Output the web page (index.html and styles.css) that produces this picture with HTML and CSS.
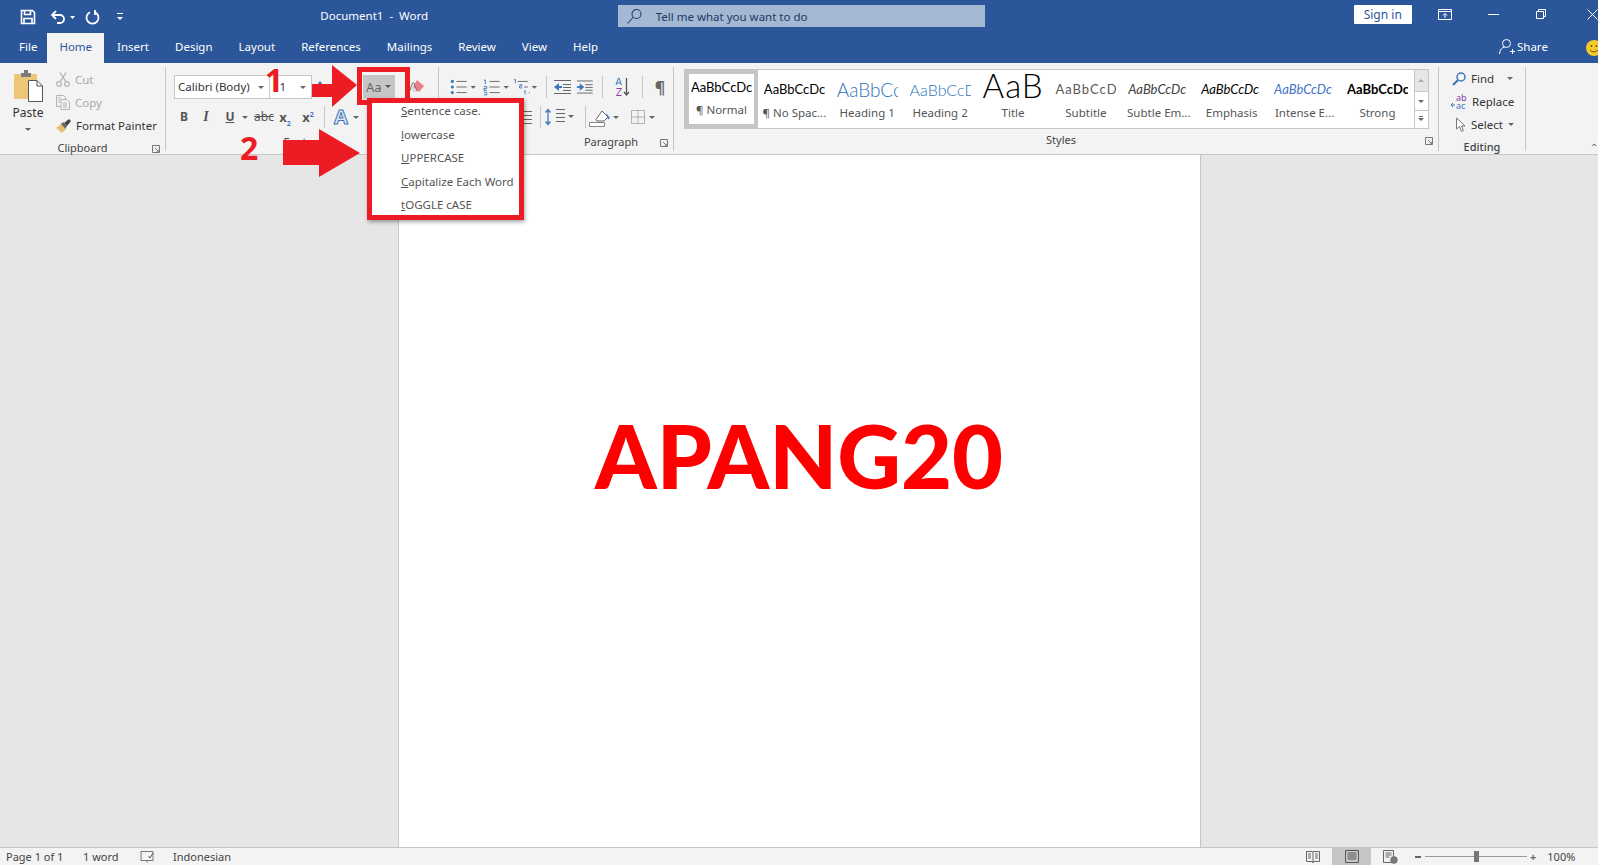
FILE: index.html
```html
<!DOCTYPE html>
<html lang="en">

<head>
    <meta charset="UTF-8">
    <meta name="viewport" content="width=device-width, initial-scale=1.0">
    <title>Document1 - Word</title>
    <link rel="stylesheet" href="styles.css">
</head>

<body>
    <div class="app">
        <header class="top">
            <div class="titlebar">
                <div class="qat">
                    <svg class="qat-save" width="16" height="16" viewBox="0 0 16 16" fill="none" stroke="#fff" stroke-width="1.6"><path d="M1.5 1.5h11l2 2v11h-13z"/><path d="M4.5 1.5v4h6v-4M4 14.5v-5h8v5"/></svg>
                    <svg class="qat-undo" width="28" height="16" viewBox="0 0 28 16" fill="none" stroke="#fff" stroke-width="1.8"><path d="M2 6h8a4 4 0 0 1 0 8H7"/><path d="M6 2L2 6l4 4"/><path d="M20 7h5l-2.500 3z" fill="#fff" stroke="none"/></svg>
                    <svg class="qat-redo" width="16" height="16" viewBox="0 0 16 16" fill="none" stroke="#fff" stroke-width="1.8"><path d="M5 3.200a6 6 0 1 0 5 0"/><path d="M10 1v5"/><path d="M6 1v.1" /></svg>
                    <svg class="qat-more" width="8" height="10" viewBox="0 0 8 10" fill="#fff"><path d="M1 1h6v1H1zM1 5h6L4 8z"/></svg>
                </div>
                <div class="doc-title">Document1&nbsp; - &nbsp;Word</div>
                <div class="tell-me">
                    <svg width="17" height="17" viewBox="0 0 17 17" fill="none" stroke="#24406e" stroke-width="1.100"><circle cx="10.500" cy="6" r="4.500"/><path d="M7 9.500L1.500 15.500"/></svg>
                    <span>Tell me what you want to do</span>
                </div>
                <div class="sign-in">Sign in</div>
                <div class="win-btns">
                    <svg width="14" height="11" viewBox="0 0 14 11" fill="none" stroke="#fff"><path d="M.5.500h13v10H.5zM.5 2.500h13M7 9V4.500M5 6.500l2-2 2 2"/></svg>
                    <svg width="11" height="1" viewBox="0 0 11 1" fill="#fff"><path d="M0 0h11v1H0z"/></svg>
                    <svg width="10" height="10" viewBox="0 0 10 10" fill="none" stroke="#fff"><path d="M.5 2.500h7v7h-7zM2.500 2.500v-2h7v7h-2"/></svg>
                    <svg width="11" height="11" viewBox="0 0 11 11" fill="none" stroke="#fff"><path d="M.5.500l10 10M10.500.500l-10 10"/></svg>
                </div>
            </div>
            <nav class="tabs">
                <span class="tab tab-file">File</span>
                <span class="tab tab-active">Home</span>
                <span class="tab">Insert</span>
                <span class="tab">Design</span>
                <span class="tab">Layout</span>
                <span class="tab">References</span>
                <span class="tab">Mailings</span>
                <span class="tab">Review</span>
                <span class="tab">View</span>
                <span class="tab">Help</span>
                <span class="share">
                    <svg width="17" height="17" viewBox="0 0 17 17" fill="none" stroke="#fff"><circle cx="8.500" cy="5.500" r="4"/><path d="M1.500 16c0-4 2.500-6.500 5-6.800M12 13.500h5M14.500 11v5"/></svg>
                    Share
                </span>
                <svg class="smiley" width="16" height="16" viewBox="0 0 16 16"><circle cx="8" cy="8" r="8" fill="#f5c92a"/><circle cx="5.500" cy="6" r="1" fill="#6b5200"/><circle cx="10.500" cy="6" r="1" fill="#6b5200"/><path d="M4 10c2 2.500 6 2.500 8 0" fill="none" stroke="#6b5200"/></svg>
            </nav>
        </header>

        <section class="ribbon">
            <div class="group group-clipboard">
                <div class="group-body clip-body">
                    <div class="paste">
                        <svg width="30" height="32" viewBox="0 0 30 32"><path d="M1 4h23v25H1z" fill="#eec678"/><path d="M8 3h3V0h4v3h3v4H8z" fill="#7b7b7b"/><path d="M15 10h9l6 6v16H15z" fill="#fff"/><path d="M15.500 10.500h8.500l5.500 5.500v15.500h-14zM24 10.500V16h5.500" fill="none" stroke="#555"/></svg>
                        <span class="paste-label">Paste</span>
                        <i class="caret"></i>
                    </div>
                    <div class="clip-list">
                        <div class="clip-item is-off">
                            <svg width="14" height="15" viewBox="0 0 14 15" fill="none" stroke="#b4b4b4" stroke-width="1.300"><circle cx="3" cy="12" r="2.300"/><circle cx="11" cy="12" r="2.300"/><path d="M4 10L10 .5M10 10L4 .5"/></svg>
                            Cut
                        </div>
                        <div class="clip-item is-off">
                            <svg width="14" height="15" viewBox="0 0 14 15" fill="#f3f3f3" stroke="#b4b4b4"><path d="M.5.500h7l2 2v9h-9z"/><path d="M5 4.500h6l2.500 2.500v7.500H5z"/><path d="M7 8h4M7 10h4M7 12h4M2 3h3M2 5h2M2 7h2"/></svg>
                            Copy
                        </div>
                        <div class="clip-item">
                            <svg width="15" height="14" viewBox="0 0 15 14"><path d="M0 9l5-4 5 5-4 4z" fill="#e7bf73"/><path d="M5 5l2-2 4 4-1.500 3z" fill="#666"/><path d="M8 4l5-4 2 2-4 5z" fill="#444"/></svg>
                            Format Painter
                        </div>
                    </div>
                </div>
                <div class="group-label">Clipboard<svg class="launcher" width="8" height="8" viewBox="0 0 8 8" fill="none" stroke="#777"><path d="M.5 7.500v-7h7v7zM3 3l4 4M7 4.500V7H4.500"/></svg></div>
            </div>

            <div class="group group-font">
                <div class="group-body">
                    <div class="tool-row font-row1">
                        <div class="combo combo-name">Calibri (Body)<i class="caret"></i></div>
                        <div class="combo combo-size">11<i class="caret"></i></div>
                        <svg class="grow" width="26" height="14" viewBox="0 0 26 14"><path d="M5 5l3-4 3 4z" fill="#3f78b8"/></svg>
                        <svg class="shrink" width="25" height="14" viewBox="0 0 25 14"></svg>
                        <div class="change-case">Aa<i class="caret"></i></div>
                        <svg class="eraser" width="16" height="15" viewBox="0 0 16 15"><path d="M8 1L15 7l-5 6L4 8z" fill="#ec7d8d"/><path d="M4 8l6 5H5L2 10z" fill="#d9d9d9"/><path d="M0 14L3.500 4h1.500L8 12" fill="none" stroke="#777"/></svg>
                    </div>
                    <div class="tool-row font-row2">
                        <span class="fb fb-b">B</span>
                        <span class="fb fb-i">I</span>
                        <span class="fb fb-u">U</span><i class="caret fb-caret"></i>
                        <span class="fb fb-abc">abc</span>
                        <span class="fb fb-x">x<sub>2</sub></span>
                        <span class="fb fb-x fb-sup">x<sup>2</sup></span>
                        <i class="vsep"></i>
                        <span class="fb fb-a">A</span><i class="caret fb-caret"></i>
                    </div>
                </div>
                <div class="group-label font-label">Font</div>
            </div>

            <div class="group group-para">
                <div class="group-body">
                    <div class="tool-row para-row1">
                        <svg width="35" height="18" viewBox="0 0 35 18"><g fill="#3f78b8"><circle cx="2.500" cy="3" r="1.700"/><circle cx="2.500" cy="9" r="1.700"/><circle cx="2.500" cy="15" r="1.700"/></g><path d="M7 3h11M7 9h11M7 15h11" stroke="#666"/><path d="M22 8h6l-3 3z" fill="#666"/></svg>
                        <svg width="33" height="18" viewBox="0 0 33 18"><g fill="none" stroke="#3f78b8"><path d="M1 1.500h1.500V6M1 8.500h3v2H1v2h3M1 14.500h3v3H1"/></g><path d="M7 3h11M7 9h11M7 15h11" stroke="#666"/><path d="M22 8h6l-3 3z" fill="#666"/></svg>
                        <svg width="31" height="18" viewBox="0 0 31 18"><g fill="none" stroke="#3f78b8"><path d="M1 1h1.500v4M7 6.500h2.500v1.500H7v2h3M12 13h1v4"/></g><path d="M5 3h11M12 9h4M17 15h1" stroke="#666"/><path d="M20 8h6l-3 3z" fill="#666"/></svg>
                        <i class="vsep"></i>
                        <svg width="25" height="18" viewBox="0 0 25 18"><path d="M3 9l5-4v8z" fill="#3f78b8"/><path d="M7 9h4" stroke="#3f78b8" stroke-width="2"/><path d="M3 2.500h17M12 6.500h8M12 9.500h8M12 12.500h8M3 15.500h17" stroke="#666"/></svg>
                        <svg width="24" height="18" viewBox="0 0 24 18"><path d="M9 9l-5-4v8z" fill="#3f78b8"/><path d="M1 9h5" stroke="#3f78b8" stroke-width="2"/><path d="M1 2.500h17M10 6.500h8M10 9.500h8M10 12.500h8M1 15.500h17" stroke="#666"/></svg>
                        <i class="vsep"></i>
                        <svg width="31" height="20" viewBox="0 0 31 20"><path d="M9 8l2.500-7h.5L14.500 8M10 6h4" fill="none" stroke="#3f78b8"/><path d="M9.500 11.500h5L9.500 18.500h5" fill="none" stroke="#8d3fa8"/><path d="M19.500 1v17M17 15l2.500 3 2.500-3" fill="none" stroke="#555" stroke-width="1.300"/></svg>
                        <i class="vsep"></i>
                        <span class="pilcrow">¶</span>
                    </div>
                    <div class="tool-row para-row2">
                        <svg width="22" height="16" viewBox="0 0 22 16"><path d="M3 2.500h14M3 6.500h10M3 10.500h14M3 14.500h10" stroke="#666"/></svg>
                        <svg width="22" height="16" viewBox="0 0 22 16"><path d="M3 2.500h14M5 6.500h10M3 10.500h14M5 14.500h10" stroke="#666"/></svg>
                        <svg width="22" height="16" viewBox="0 0 22 16"><path d="M3 2.500h14M7 6.500h10M3 10.500h14M7 14.500h10" stroke="#666"/></svg>
                        <svg width="22" height="16" viewBox="0 0 22 16"><path d="M3 2.500h14M3 6.500h14M3 10.500h14M3 14.500h14" stroke="#666"/></svg>
                        <i class="vsep"></i>
                        <svg width="38" height="18" viewBox="0 0 38 18"><path d="M12 1.500h9M12 5.500h9M12 9.500h9M12 13.500h9" stroke="#666"/><path d="M4 2v14M1.500 4.500L4 1.500l2.500 3M1.500 13.500L4 16.500l2.500-3" fill="none" stroke="#3f78b8" stroke-width="1.300"/><path d="M24 7h6l-3 3z" fill="#666"/></svg>
                        <i class="vsep"></i>
                        <svg width="38" height="19" viewBox="0 0 38 19"><path d="M7 11.500L13 3l6 6-4 4H8z" fill="#fff" stroke="#666"/><path d="M17 5l4 5-2 1.500z" fill="#3f78b8"/><path d="M.5 14.500h15v4H.5z" fill="#fff" stroke="#888"/><path d="M24 8h6l-3 3z" fill="#666"/></svg>
                        <svg width="30" height="16" viewBox="0 0 30 16"><path d="M4.500 1.500h13v13h-13zM11 1.500v13M4.500 8h13" fill="none" stroke="#777" stroke-dasharray="1 1"/><path d="M22 7h6l-3 3z" fill="#666"/></svg>
                    </div>
                </div>
                <div class="group-label para-label">Paragraph<svg class="launcher" width="8" height="8" viewBox="0 0 8 8" fill="none" stroke="#777"><path d="M.5 7.500v-7h7v7zM3 3l4 4M7 4.500V7H4.500"/></svg></div>
            </div>

            <div class="group group-styles">
                <div class="gallery">
                    <div class="style-item is-current"><div class="preview">AaBbCcDc</div><div class="style-name">¶ Normal</div></div>
                    <div class="style-item"><div class="preview">AaBbCcDc</div><div class="style-name">¶ No Spac...</div></div>
                    <div class="style-item"><div class="preview pv-h1">AaBbCc</div><div class="style-name">Heading 1</div></div>
                    <div class="style-item"><div class="preview pv-h2">AaBbCcD</div><div class="style-name">Heading 2</div></div>
                    <div class="style-item"><div class="preview pv-title">AaB</div><div class="style-name">Title</div></div>
                    <div class="style-item"><div class="preview pv-sub">AaBbCcD</div><div class="style-name">Subtitle</div></div>
                    <div class="style-item"><div class="preview pv-subtle">AaBbCcDc</div><div class="style-name">Subtle Em...</div></div>
                    <div class="style-item"><div class="preview pv-em">AaBbCcDc</div><div class="style-name">Emphasis</div></div>
                    <div class="style-item"><div class="preview pv-intense">AaBbCcDc</div><div class="style-name">Intense E...</div></div>
                    <div class="style-item"><div class="preview pv-strong">AaBbCcDc</div><div class="style-name">Strong</div></div>
                    <div class="gallery-scroll">
                        <span class="scroll-up"><i class="caret caret-up"></i></span>
                        <span><i class="caret"></i></span>
                        <span class="scroll-more"><i class="caret"></i></span>
                    </div>
                </div>
                <div class="group-label">Styles<svg class="launcher" width="8" height="8" viewBox="0 0 8 8" fill="none" stroke="#777"><path d="M.5 7.500v-7h7v7zM3 3l4 4M7 4.500V7H4.500"/></svg></div>
            </div>

            <div class="group group-editing">
                <div class="group-body edit-list">
                    <div class="edit-item">
                        <svg width="14" height="14" viewBox="0 0 14 14" fill="none" stroke="#3f78b8" stroke-width="1.500"><circle cx="9" cy="5" r="4"/><path d="M6 8l-5 5" stroke-width="2.200"/></svg>
                        Find<i class="caret edit-caret"></i>
                    </div>
                    <div class="edit-item">
                        <svg class="edit-replace" width="18" height="16" viewBox="0 0 18 16"><text x="6" y="7" class="rep-ab">ab</text><text x="6" y="15" class="rep-ac">ac</text><path d="M1 11h4M3 9l-2 2 2 2" fill="none" stroke="#3f78b8"/></svg>
                        Replace
                    </div>
                    <div class="edit-item">
                        <svg width="14" height="16" viewBox="0 0 14 16" fill="#fff" stroke="#777"><path d="M4.500 1v11l3-2.500 2 5 2-1-2-4.500h3.500z"/></svg>
                        Select<i class="caret"></i>
                    </div>
                </div>
                <div class="group-label editing-label">Editing</div>
            </div>
            <span class="collapse">⌃</span>
        </section>

        <main class="workspace">
            <div class="page">
                <div class="big-text">APANG20</div>
            </div>
        </main>

        <footer class="statusbar">
            <span class="st-page">Page 1 of 1</span>
            <span class="st-words">1 word</span>
            <svg class="st-proof" width="14" height="13" viewBox="0 0 14 13" fill="none" stroke="#777"><path d="M7 1.500H1v9h6v2M7 1.500h6v9H7"/><path d="M8.500 6l1.500 2 3-5" stroke="#555"/></svg>
            <span class="st-lang">Indonesian</span>
            <div class="st-right">
                <svg class="st-read" width="14" height="14" viewBox="0 0 14 14" fill="none" stroke="#666"><path d="M.5 1.500h6l.5 1 .5-1h6v10h-6L7 13l-.5-1.500h-6zM7 2.500v9M2 4h3M2 6h3M2 8h3M9 4h3M9 6h3M9 8h3"/></svg>
                <span class="st-print">
                    <svg width="14" height="13" viewBox="0 0 14 13" fill="none" stroke="#555"><path d="M.5.500h13v12H.5zM2.500 3h9M2.500 5h9M2.500 7h9M2.500 9h9"/></svg>
                </span>
                <svg class="st-web" width="15" height="14" viewBox="0 0 15 14"><path d="M.5.500h10v12H.5zM2.500 3h6M2.500 5h6M2.500 7h4" fill="none" stroke="#666"/><circle cx="11" cy="10" r="3.700" fill="#777"/></svg>
                <span class="zoom-minus"></span>
                <span class="slider"><i class="thumb"></i></span>
                <span class="zoom-plus">+</span>
                <span class="zoom-val">100%</span>
            </div>
        </footer>

        <!-- tutorial markup over the screenshot -->
        <svg class="arrows" width="380" height="130" viewBox="0 0 380 130">
            <path d="M32 19h20V0l25 20-25 22V32H32z" fill="#ed1c24"/>
            <path d="M3 75h36V64l41 24-41 24V100H3z" fill="#ed1c24"/>
        </svg>
        <span class="mark mark-1">1</span>
        <span class="mark mark-2">2</span>
        <div class="mark-box"></div>
        <ul class="case-menu">
            <li><u>S</u>entence case.</li>
            <li><u>l</u>owercase</li>
            <li><u>U</u>PPERCASE</li>
            <li><u>C</u>apitalize Each Word</li>
            <li><u>t</u>OGGLE cASE</li>
        </ul>
    </div>
</body>

</html>
```

FILE: styles.css
```css
* {
    box-sizing: border-box;
}

body {
    margin: 0;
    overflow: hidden;
    font-family: "Noto Sans", sans-serif;
    font-size: 11.5px;
    color: #444;
}

.app {
    position: relative;
    display: flex;
    flex-direction: column;
    width: 1598px;
    height: 865px;
    overflow: hidden;
}

i {
    display: inline-block;
}

.caret {
    width: 0;
    height: 0;
    border-left: 3px solid transparent;
    border-right: 3px solid transparent;
    border-top: 3px solid #666;
}

.caret-up {
    border-top: 0;
    border-bottom: 3px solid #aaa;
}

.vsep {
    width: 1px;
    height: 22px;
    background: #c6c6c6;
}

/* title bar + tabs */
.top {
    flex: none;
    height: 63px;
    background: #2b579a;
    color: #fff;
}

.titlebar {
    position: relative;
    display: flex;
    align-items: center;
    height: 33px;
}

.qat {
    display: flex;
    align-items: center;
    width: 323px;
    padding-left: 20px;
}

.qat-undo {
    margin-left: 14px;
}

.qat-redo {
    margin-left: 7px;
}

.qat-more {
    margin-left: 15px;
}

.doc-title {
    width: 300px;
    margin-top: -3px;
}

.tell-me {
    display: flex;
    align-items: center;
    gap: 13px;
    width: 370px;
    height: 22px;
    margin-top: -1px;
    padding-left: 8px;
    background: #a3b8d3;
    color: #1f3864;
}

.sign-in {
    width: 59px;
    height: 19px;
    margin-left: 369px;
    margin-top: -4px;
    border-radius: 1px;
    background: #fff;
    color: #2b579a;
    font-size: 12px;
    line-height: 19px;
    text-align: center;
}

.win-btns {
    display: flex;
    align-items: center;
    margin-left: 26px;
    margin-top: -5px;
    gap: 36px;
}

.win-btns svg:nth-child(3) {
    margin-left: 1px;
}

.win-btns svg:nth-child(4) {
    margin-left: 5px;
}

.tabs {
    position: relative;
    display: flex;
    height: 30px;
    padding-left: 6px;
}

.tab {
    padding: 0 13px;
    line-height: 28px;
    font-size: 11.5px;
}

.tab-file {
    padding-right: 10px;
}

.tab-active {
    padding: 0 12px;
    background: #f3f3f3;
    color: #2b579a;
}

.share {
    position: absolute;
    left: 1498px;
    top: 5px;
    display: flex;
    align-items: center;
    gap: 2px;
}

.smiley {
    position: absolute;
    left: 1586px;
    top: 7px;
}

/* ribbon */
.ribbon {
    position: relative;
    flex: none;
    display: flex;
    height: 92px;
    background: #f3f3f3;
    border-bottom: 1px solid #c6c6c6;
}

.group {
    position: relative;
    display: flex;
    flex-direction: column;
    margin-top: 4px;
    height: 84px;
    border-right: 1px solid #c6c6c6;
}

.group-body {
    flex: 1;
}

.group-label {
    position: relative;
    height: 17px;
    line-height: 16px;
    text-align: center;
    font-size: 11px;
    margin-top: 3px;
}

.launcher {
    position: absolute;
    right: 5px;
    top: 5px;
}

.group-clipboard {
    width: 166px;
}

.clip-body {
    display: flex;
}

.paste {
    display: flex;
    flex-direction: column;
    align-items: center;
    width: 56px;
    padding-top: 3px;
}

.paste-label {
    margin-top: 3px;
    font-size: 12px;
    line-height: 16px;
    color: #333;
}

.paste .caret {
    margin-top: 7px;
}

.clip-list {
    padding-top: 1px;
}

.clip-item {
    display: flex;
    align-items: center;
    gap: 5px;
    height: 23px;
    color: #333;
    white-space: nowrap;
}

.clip-item.is-off {
    color: #aaa;
}

.group-font {
    width: 273px;
}

.tool-row {
    display: flex;
    align-items: center;
}

.font-row1 {
    height: 25px;
    margin-top: 7px;
    padding-left: 8px;
}

.combo {
    position: relative;
    height: 24px;
    padding-left: 3px;
    border: 1px solid #c6c6c6;
    background: #fff;
    line-height: 22px;
    font-family: "Noto Sans", sans-serif;
    font-size: 11.5px;
    color: #333;
}

.combo .caret {
    position: absolute;
    right: 5px;
    top: 10px;
}

.combo-name {
    width: 96px;
}

.combo-size {
    width: 43px;
    margin-left: -1px;
}

.change-case {
    display: flex;
    align-items: center;
    gap: 3px;
    flex: none;
    width: 32px;
    height: 24px;
    padding-left: 3px;
    background: #c6c6c6;
    color: #666;
    font-size: 13px;
}

.change-case .caret {
    border-top-color: #555;
}

.eraser {
    margin-left: 14px;
}

.font-row2 {
    height: 26px;
    margin-top: 5px;
    padding-left: 7px;
    color: #555;
    font-size: 12px;
}

.fb {
    width: 22px;
    text-align: center;
    font-weight: 700;
    line-height: 1;
}

.fb-i {
    font-family: "Liberation Serif", serif;
    font-style: italic;
    font-size: 14px;
}

.fb-u {
    margin-left: 2px;
    text-decoration: underline;
}

.fb-caret {
    margin-left: 1px;
    margin-right: 1px;
}

.fb-abc {
    margin-left: 4px;
    font-weight: 400;
    text-decoration: line-through;
}

.fb-x {
    width: 20px;
    font-size: 13px;
}

.fb-sup {
    width: 22px;
    margin-left: 2px;
}

.fb sub,
.fb sup {
    font-size: 7px;
    line-height: 0;
    color: #3f78b8;
}

.font-row2 .vsep {
    margin: 0 5px;
}

.fb-a {
    font-size: 20px;
    color: #dfe9f5;
    -webkit-text-stroke: 1px #3f78b8;
}

.font-label {
    padding-right: 14px;
}

.group-para {
    width: 235px;
}

.para-row1 {
    height: 25px;
    margin-top: 7px;
    padding-left: 11px;
}

.para-row1 .vsep {
    margin: 0 4px;
}

.para-row1 .vsep + svg {
    flex: none;
}

.para-row1 svg:nth-child(7) {
    margin-left: 3px;
}

.pilcrow {
    width: 28px;
    text-align: center;
    font-size: 16px;
    font-weight: 700;
    color: #666;
}

.para-row2 {
    height: 26px;
    margin-top: 5px;
    padding-left: 10px;
}

.para-row2 .vsep {
    margin: 0 3px;
}

.para-label {
    padding-left: 110px;
}

.group-styles {
    width: 765px;
    padding-left: 10px;
}

.gallery {
    position: relative;
    display: grid;
    grid-template-columns: repeat(10, 72.9px) 14px;
    width: 745px;
    height: 60px;
    margin-top: 2px;
    border: 1px solid #c6c6c6;
    background: #fff;
}

.style-item {
    padding: 4px 4px 0;
    text-align: center;
    overflow: hidden;
}

.style-item.is-current {
    margin: 0;
    padding: 0;
    border: 4px solid #c6c6c6;
}

.preview {
    width: 61px;
    height: 30px;
    margin: 0 auto;
    overflow: hidden;
    white-space: nowrap;
    font-family: Lato, sans-serif;
    font-size: 13px;
    line-height: 31px;
    text-align: left;
    color: #000;
}

.is-current .preview {
    height: 27px;
    line-height: 27px;
}

.pv-h1 {
    font-size: 19px;
    font-weight: 300;
    color: #2e74b5;
}

.pv-h2 {
    font-size: 16px;
    font-weight: 300;
    color: #2e74b5;
}

.pv-title {
    font-size: 33px;
    font-weight: 300;
    line-height: 22px;
    letter-spacing: 1px;
    text-align: center;
}

.pv-sub {
    font-size: 13px;
    letter-spacing: 1px;
    color: #5a5a5a;
}

.pv-subtle {
    font-style: italic;
    color: #404040;
}

.pv-em {
    font-style: italic;
}

.pv-intense {
    font-style: italic;
    color: #4472c4;
}

.pv-strong {
    font-weight: 700;
}

.style-name {
    font-size: 11.5px;
    line-height: 18px;
    color: #555;
    white-space: nowrap;
}

.gallery-scroll {
    display: grid;
    grid-template-rows: 21px 19px 1fr;
    border-left: 1px solid #c6c6c6;
}

.gallery-scroll span {
    display: flex;
    align-items: center;
    justify-content: center;
    border-top: 1px solid #c6c6c6;
}

.gallery-scroll span:first-child {
    border-top: 0;
    background: #e6e6e6;
}

.scroll-more .caret {
    box-shadow: 0 -3px 0 -1px #666;
}

.group-editing {
    width: 87px;
}

.edit-list {
    padding-left: 13px;
}

.edit-item {
    display: flex;
    align-items: center;
    gap: 5px;
    height: 23px;
    color: #333;
}

.edit-caret {
    margin-left: 8px;
}

.edit-replace {
    margin-left: -2px;
    margin-right: -1px;
}

.rep-ab {
    font-size: 9px;
    fill: #7e3fa8;
}

.rep-ac {
    font-size: 9px;
    fill: #3f78b8;
}

.editing-label {
    font-weight: 500;
}

.collapse {
    position: absolute;
    right: 0;
    bottom: 0;
    color: #666;
    font-size: 10px;
}

/* document */
.workspace {
    flex: 1;
    display: flex;
    justify-content: center;
    min-height: 0;
    background: #e6e6e6;
}

.page {
    width: 803px;
    border-left: 1px solid #c6c6c6;
    border-right: 1px solid #c6c6c6;
    background: #fff;
    padding-top: 250px;
    text-align: center;
}

.big-text {
    font-family: Lato, sans-serif;
    font-weight: 900;
    font-size: 88px;
    line-height: 100px;
    color: #f00;
}

/* status bar */
.statusbar {
    flex: none;
    display: flex;
    align-items: center;
    height: 18px;
    border-top: 1px solid #c6c6c6;
    background: #f3f3f3;
    font-size: 11px;
    color: #444;
}

.st-page {
    margin-left: 6px;
    width: 77px;
}

.st-words {
    width: 57px;
}

.st-lang {
    margin-left: 19px;
}

.st-right {
    display: flex;
    align-items: center;
    height: 100%;
    margin-left: 1075px;
}

.st-print {
    display: flex;
    align-items: center;
    justify-content: center;
    width: 39px;
    height: 100%;
    margin: 0 12px 0 12px;
    background: #c6c6c6;
}

.zoom-minus {
    width: 6px;
    height: 2px;
    margin-left: 17px;
    background: #666;
}

.slider {
    position: relative;
    width: 102px;
    height: 1px;
    margin-left: 4px;
    background: #999;
}

.thumb {
    position: absolute;
    left: 49px;
    top: -5px;
    width: 5px;
    height: 11px;
    background: #777;
}

.zoom-plus {
    margin-left: 3px;
    font-weight: 700;
    color: #666;
}

.zoom-val {
    margin-left: 11px;
    white-space: nowrap;
}

/* annotations */
.arrows {
    position: absolute;
    left: 280px;
    top: 65px;
    pointer-events: none;
}

.mark {
    position: absolute;
    font-family: "Open Sans", sans-serif;
    font-weight: 700;
    font-size: 32px;
    line-height: 32px;
    color: #ed1c24;
}

.mark-1 {
    left: 265px;
    top: 64px;
}

.mark-2 {
    left: 240px;
    top: 132px;
}

.mark-box {
    position: absolute;
    left: 357px;
    top: 67px;
    width: 53px;
    height: 38px;
    border: 5px solid #ed1c24;
}

.case-menu {
    position: absolute;
    left: 367px;
    top: 98px;
    width: 157px;
    height: 122px;
    margin: 0;
    padding: 0 0 0 29px;
    list-style: none;
    border: 5px solid #ed1c24;
    background: #fff;
    box-shadow: 1px 2px 4px rgba(0, 0, 0, 0.35);
    overflow: hidden;
    color: #555;
}

.case-menu li {
    height: 23.6px;
    line-height: 23.6px;
    white-space: nowrap;
    position: relative;
    top: -4px;
}
```
